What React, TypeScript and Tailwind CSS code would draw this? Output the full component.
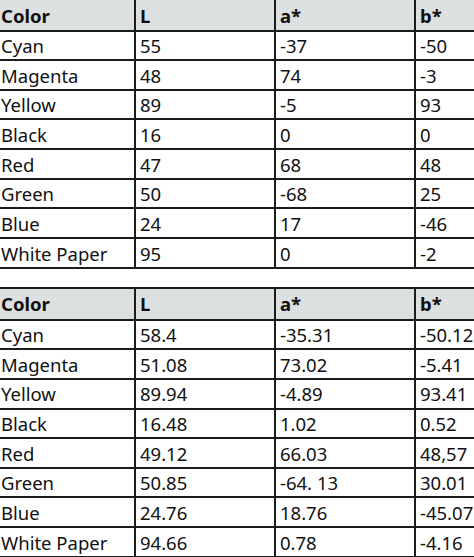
const first = [
  ["Cyan", "55", "-37", "-50"],
  ["Magenta", "48", "74", "-3"],
  ["Yellow", "89", "-5", "93"],
  ["Black", "16", "0", "0"],
  ["Red", "47", "68", "48"],
  ["Green", "50", "-68", "25"],
  ["Blue", "24", "17", "-46"],
  ["White Paper", "95", "0", "-2"],
];

const second = [
  ["Cyan", "58.4", "-35.31", "-50.12"],
  ["Magenta", "51.08", "73.02", "-5.41"],
  ["Yellow", "89.94", "-4.89", "93.41"],
  ["Black", "16.48", "1.02", "0.52"],
  ["Red", "49.12", "66.03", "48,57"],
  ["Green", "50.85", "-64. 13", "30.01"],
  ["Blue", "24.76", "18.76", "-45.07"],
  ["White Paper", "94.66", "0.78", "-4.16"],
];

const head = ["Color", "L", "a*", "b*"];

function Row({ cells, header, className }: { cells: string[]; header?: boolean; className: string }) {
  return (
    <div
      className={`grid grid-cols-[133.5px_140px_140px_160px] border-[#1c1c1c] ${header ? "bg-[#dde0e1] font-bold" : "bg-white"} ${className}`}
    >
      {cells.map((c, i) => (
        <div
          key={i}
          className={`flex items-center pt-[2px] whitespace-pre ${i === 0 ? "pl-[1px]" : "pl-[4.5px] border-l-2 border-[#1c1c1c]"}`}
        >
          {c}
        </div>
      ))}
    </div>
  );
}

function LabTable({ rows, top }: { rows: string[][]; top: boolean }) {
  return (
    <div className="flex flex-col">
      <Row
        cells={head}
        header
        className={top ? "h-[31.5px] border-b-2" : "h-[34px] border-y-2"}
      />
      {rows.map((r, i) => (
        <Row key={i} cells={r} className="h-[29.65px] border-b-2" />
      ))}
    </div>
  );
}

export default function App() {
  return (
    <div
      className="w-[474px] h-[557px] overflow-hidden bg-white text-[18.5px] text-[#111] leading-none"
      style={{ fontFamily: '"Noto Sans", "Open Sans", sans-serif' }}
    >
      <LabTable rows={first} top />
      <div className="h-[18px]" />
      <LabTable rows={second} top={false} />
    </div>
  );
}
